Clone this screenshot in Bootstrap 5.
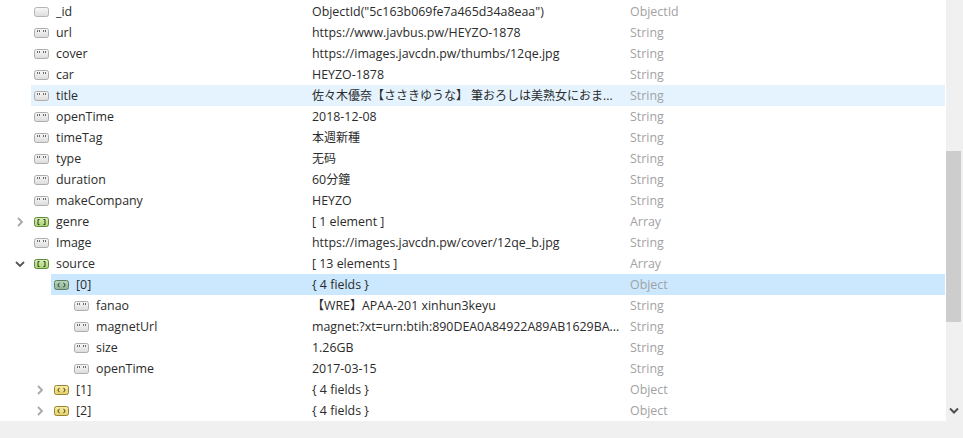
<!DOCTYPE html>
<html lang="en">
<head>
<meta charset="utf-8">
<title>Document fields</title>
<link href="https://cdn.jsdelivr.net/npm/bootstrap@5.3.0/dist/css/bootstrap.min.css" rel="stylesheet">
<style>
html,body{height:100%;overflow:hidden;background:#f0f0f0;}
body{font-family:"Open Sans","Noto Sans CJK JP",sans-serif;font-size:12.4px;color:#2b2b2b;}
.shell{height:438px;}
.tree{width:946px;height:421px;background:#fff;padding-top:1px;flex:none;}
.scroller{width:17px;height:421px;flex:none;background:#f0f0f0;}
.thumb{margin-top:151px;width:15px;height:171px;background:#cdcdcd;}
.scroll-down{left:3px;bottom:6px;}
.rowline{height:21px;line-height:20px;margin-right:1px;white-space:nowrap;}
.rowline.hot{background:#e5f3ff;margin-left:31px;}
.rowline.sel{background:#cce8ff;margin-left:51px;}
.cell-key{flex:none;}
.cell-val{width:318px;flex:none;overflow:hidden;}
.cell-type{color:#a2a2a2;flex:none;}
.tw{width:14px;flex:none;justify-content:center;margin-right:7px;}
.ico{width:16px;height:12px;flex:none;margin-right:6px;}
.cj{font-size:12px;}
</style>
</head>
<body>
<svg width="0" height="0" class="d-block" aria-hidden="true">
<defs>
<linearGradient id="gs" x1="0" y1="0" x2="0" y2="1"><stop offset="0" stop-color="#f8f8f8"/><stop offset="1" stop-color="#dcdcdc"/></linearGradient>
<linearGradient id="ga" x1="0" y1="0" x2="0" y2="1"><stop offset="0" stop-color="#dcefb8"/><stop offset="1" stop-color="#a8d070"/></linearGradient>
<linearGradient id="go" x1="0" y1="0" x2="0" y2="1"><stop offset="0" stop-color="#f8efaa"/><stop offset="1" stop-color="#e3cf6c"/></linearGradient>
<linearGradient id="gx" x1="0" y1="0" x2="0" y2="1"><stop offset="0" stop-color="#bcd6bd"/><stop offset="1" stop-color="#8fb195"/></linearGradient>
<symbol id="i-id" viewBox="0 0 16 12"><rect x=".5" y="1.5" width="14" height="9" rx="2" fill="url(#gs)" stroke="#b5b5b5"/></symbol>
<symbol id="i-str" viewBox="0 0 16 12"><rect x=".5" y="1.5" width="14" height="9" rx="2" fill="url(#gs)" stroke="#adadad"/><path d="M3.5 3v2M5.5 3v2M9.5 3v2M11.5 3v2" stroke="#6a6a6a" stroke-width="1"/></symbol>
<symbol id="i-arr" viewBox="0 0 16 12"><rect x=".5" y="1.5" width="14" height="9" rx="2" fill="url(#ga)" stroke="#5f8a3a"/><path d="M5.5 3.5H4v5h1.5M9.5 3.5H11v5H9.5" fill="none" stroke="#23420f"/></symbol>
<symbol id="i-obj" viewBox="0 0 16 12"><rect x=".5" y="1.5" width="14" height="9" rx="2" fill="url(#go)" stroke="#99832e"/><path d="M5.5 3.8 3.8 6l1.7 2.2M9.5 3.8 11.2 6 9.5 8.2" fill="none" stroke="#4a3c08"/></symbol>
<symbol id="i-obs" viewBox="0 0 16 12"><rect x=".5" y="1.5" width="14" height="9" rx="2" fill="url(#gx)" stroke="#5d7f63"/><path d="M5.5 3.8 3.8 6l1.7 2.2M9.5 3.8 11.2 6 9.5 8.2" fill="none" stroke="#1f3d25"/></symbol>
<symbol id="c-r" viewBox="0 0 14 14"><path d="M5 3l4 4-4 4" fill="none" stroke="#a8a8a8" stroke-width="1.8"/></symbol>
<symbol id="c-d" viewBox="0 0 14 14"><path d="M3 5l4 4 4-4" fill="none" stroke="#555" stroke-width="1.8"/></symbol>
</defs>
</svg>
<div class="shell d-flex align-items-start">
<main class="tree" id="tree"></main>
<div class="scroller position-relative" aria-hidden="true">
<div class="thumb"></div>
<svg class="position-absolute scroll-down" width="10" height="8" viewBox="0 0 10 8"><path d="M1 1.5l4 4 4-4" fill="none" stroke="#505050" stroke-width="2"/></svg>
</div>
</div>
<script>
var rows=[
[0,'','id','_id','ObjectId("5c163b069fe7a465d34a8eaa")','ObjectId'],
[0,'','str','url','https://www.javbus.pw/HEYZO-1878','String'],
[0,'','str','cover','https://images.javcdn.pw/thumbs/12qe.jpg','String'],
[0,'','str','car','HEYZO-1878','String'],
[0,'','str','title','<span class="cj">佐々木優奈【ささきゆうな】 筆おろしは美熟女におま...</span>','String','hot'],
[0,'','str','openTime','2018-12-08','String'],
[0,'','str','timeTag','<span class="cj">本週新種</span>','String'],
[0,'','str','type','<span class="cj">无码</span>','String'],
[0,'','str','duration','60<span class="cj">分鐘</span>','String'],
[0,'','str','makeCompany','HEYZO','String'],
[0,'r','arr','genre','[ 1 element ]','Array'],
[0,'','str','Image','https://images.javcdn.pw/cover/12qe_b.jpg','String'],
[0,'d','arr','source','[ 13 elements ]','Array'],
[1,'d','obs','[0]','{ 4 fields }','Object','sel'],
[2,'','str','fanao','<span class="cj">【</span>WRE<span class="cj">】</span>APAA-201 xinhun3keyu','String'],
[2,'','str','magnetUrl','magnet:?xt=urn:btih:890DEA0A84922A89AB1629BA...','String'],
[2,'','str','size','1.26GB','String'],
[2,'','str','openTime','2017-03-15','String'],
[1,'r','obj','[1]','{ 4 fields }','Object'],
[1,'r','obj','[2]','{ 4 fields }','Object']];
var html='';
rows.forEach(function(r){
  var cls=r[6]||'';
  var iconX=[34,54,74][r[0]];
  var start=cls=='hot'?31:(cls=='sel'?51:0);
  var hasTw=r[0]<2&&!cls;
  html+='<div class="rowline d-flex align-items-center '+cls+'">';
  html+='<div class="cell-key d-flex align-items-center" style="width:'+(312-start)+'px;padding-left:'+(hasTw?iconX-21:iconX-start)+'px">';
  if(hasTw)html+='<span class="tw d-inline-flex">'+(r[1]?'<svg width="14" height="14"><use href="#c-'+r[1]+'"/></svg>':'')+'</span>';
  html+='<svg class="ico"><use href="#i-'+r[2]+'"/></svg><span>'+r[3]+'</span></div>';
  html+='<div class="cell-val">'+r[4]+'</div><div class="cell-type">'+r[5]+'</div></div>';
});
document.getElementById('tree').innerHTML=html;
</script>
<script src="https://cdn.jsdelivr.net/npm/bootstrap@5.3.0/dist/js/bootstrap.bundle.min.js"></script>
</body>
</html>
